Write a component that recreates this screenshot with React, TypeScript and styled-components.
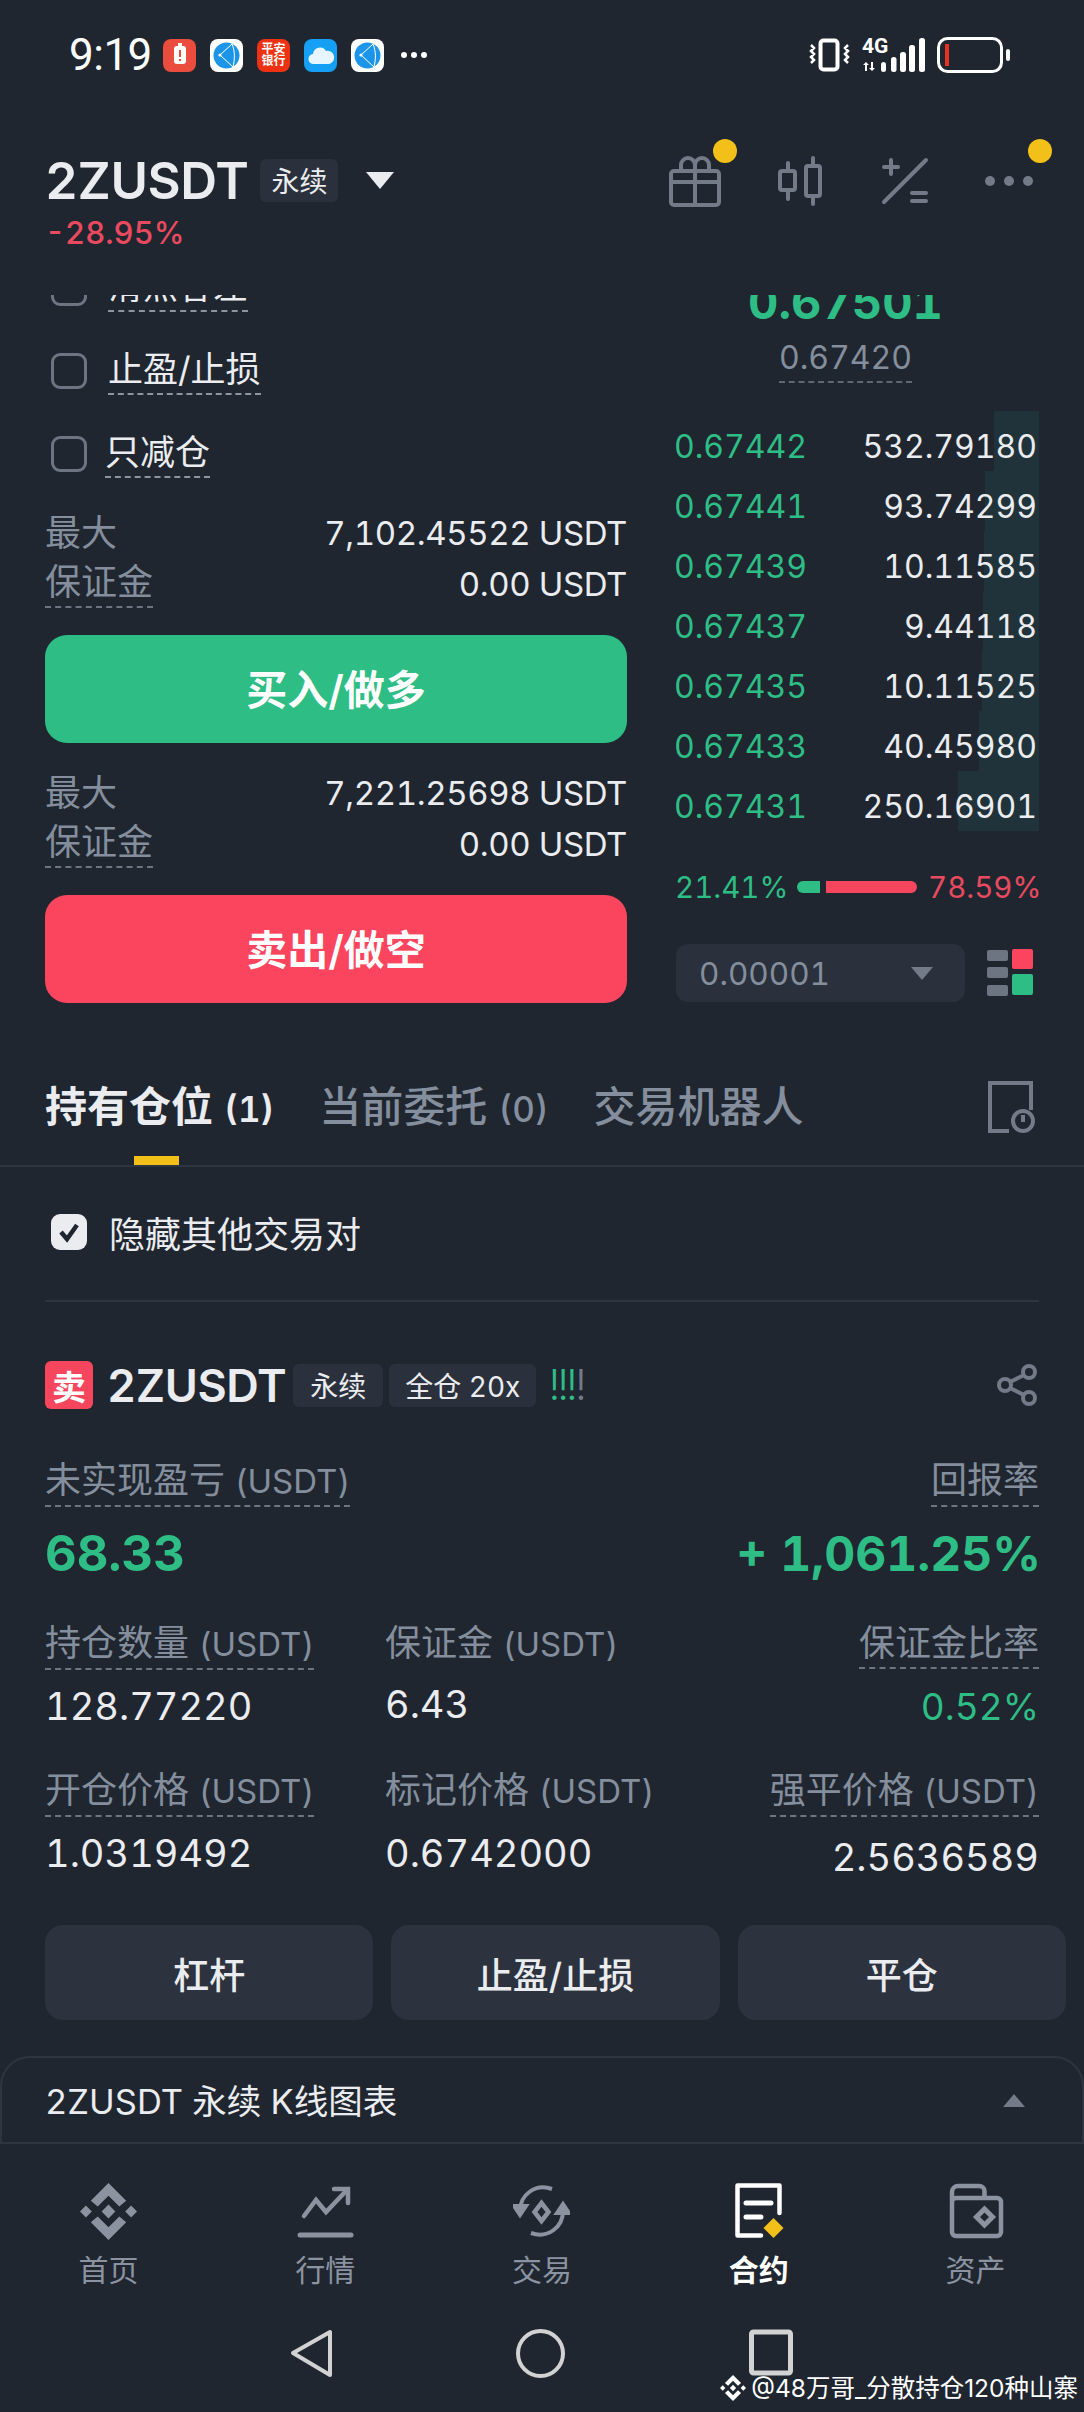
import React from 'react'
import styled, { createGlobalStyle } from 'styled-components'

const FONT = 'Inter, "Noto Sans CJK SC", "Noto Sans", sans-serif'
const BG = '#1f2630'
const GREEN = '#2ebd85'
const RED = '#f6465d'
const GRAY = '#848e9c'
const LIGHT = '#eaecef'
const CHIP = '#2a313c'
const YELLOW = '#f3c019'

const GlobalStyle = createGlobalStyle`
  html, body { margin: 0; padding: 0; background: ${BG}; }
  * { box-sizing: border-box; }
`

const Page = styled.div`
  width: 1084px;
  height: 2412px;
  position: relative;
  overflow: hidden;
  display: flex;
  flex-direction: column;
  background: ${BG};
  color: ${LIGHT};
  font-family: ${FONT};
  font-feature-settings: 'tnum' 1;
`

/* status bar */
const StatusBar = styled.div`
  height: 110px;
  flex: none;
  display: flex;
  align-items: center;
  padding: 0 74px 0 69px;
  color: #fff;
`
const Clock = styled.span`
  font-family: Roboto, sans-serif;
  font-size: 44px;
  width: 94px;
  letter-spacing: -0.5px;
`
const AppIcons = styled.div`
  display: flex;
  gap: 14px;
  align-items: center;
`
const AppIcon = styled.div<{ $bg: string }>`
  width: 33px;
  height: 33px;
  border-radius: 8px;
  background: ${(p) => p.$bg};
  display: flex;
  align-items: center;
  justify-content: center;
  overflow: hidden;
`
const BankText = styled.span`
  width: 24px;
  font-size: 12px;
  line-height: 12px;
  font-weight: 700;
  color: #fff;
  text-align: center;
`
const StatusDots = styled.span`
  margin-left: 17px;
  display: flex;
  gap: 4px;
  i {
    width: 6px;
    height: 6px;
    border-radius: 50%;
    background: #fff;
  }
`
const StatusRight = styled.div`
  margin-left: auto;
  display: flex;
  align-items: center;
  gap: 12px;
`
const NetWrap = styled.div`
  width: 63px;
  height: 34px;
  position: relative;
`
const NetLabel = styled.span`
  position: absolute;
  left: 0;
  top: -3px;
  font-family: Roboto, sans-serif;
  font-size: 21px;
  font-weight: 700;
  line-height: 22px;
`

/* header */
const Header = styled.div`
  height: 185px;
  flex: none;
  padding: 40px 46px 0 45px;
  display: flex;
  justify-content: space-between;
`
const TitleRow = styled.div`
  display: flex;
  align-items: center;
  height: 60px;
`
const Title = styled.span<{ $size?: number }>`
  font-size: ${(p) => p.$size ?? 51}px;
  font-weight: 600;
  letter-spacing: -0.4px;
  color: ${LIGHT};
`
const Tag = styled.span<{ $gap?: number; $pad?: number }>`
  height: 43px;
  padding: 0 ${(p) => p.$pad ?? 11}px;
  margin-left: ${(p) => p.$gap ?? 12}px;
  border-radius: 6px;
  background: ${CHIP};
  display: inline-flex;
  align-items: center;
  font-size: 28px;
  color: ${LIGHT};
  white-space: nowrap;
`
const Caret = styled.span`
  width: 0;
  height: 0;
  margin-left: 28px;
  border-left: 14px solid transparent;
  border-right: 14px solid transparent;
  border-top: 17px solid ${LIGHT};
`
const Change = styled.div`
  font-size: 31px;
  line-height: 46px;
  font-weight: 500;
  color: #ea4a5f;
`
const HeaderIcons = styled.div`
  display: flex;
  gap: 49px;
  padding-top: 5px;
`
const HeaderIcon = styled.div`
  width: 56px;
  height: 56px;
  position: relative;
  color: #737b88;
`
const Badge = styled.i`
  position: absolute;
  right: -14px;
  top: -16px;
  width: 24px;
  height: 24px;
  border-radius: 50%;
  background: ${YELLOW};
`

/* trade panel */
const TradeSection = styled.div`
  height: 745px;
  flex: none;
  overflow: hidden;
  padding: 0 45px;
  display: grid;
  grid-template-columns: 582px 363px;
  column-gap: 49px;
`
const OrderForm = styled.div`
  margin-top: -49px;
`
const OptionRow = styled.div<{ $gap?: number }>`
  height: 83px;
  display: flex;
  align-items: center;
  padding-left: 6px;
  gap: ${(p) => p.$gap ?? 21}px;
`
const Box = styled.span`
  width: 36px;
  height: 36px;
  flex: none;
  border: 3px solid #6d7583;
  border-radius: 9px;
`
const HintText = styled.span<{ $size?: number; $muted?: boolean }>`
  font-size: ${(p) => p.$size ?? 36}px;
  line-height: 44px;
  color: ${(p) => (p.$muted ? GRAY : LIGHT)};
  display: inline-block;
  white-space: nowrap;
  padding-bottom: 2px;
  border-bottom: 2px dashed ${(p) => (p.$muted ? '#6d7583' : '#8d95a1')};
`
const MaxBlock = styled.div`
  margin-top: 12px;
`
const InfoRow = styled.div`
  height: 51px;
  display: flex;
  align-items: center;
  justify-content: space-between;
`
const InfoLabel = styled.span`
  font-size: 36px;
  line-height: 44px;
  color: ${GRAY};
  white-space: nowrap;
`
const InfoValue = styled.span`
  font-size: 33px;
  color: ${LIGHT};
  letter-spacing: -0.4px;
`
const ActionButton = styled.div<{ $bg: string }>`
  height: 108px;
  margin: 26px 0 24px;
  padding-bottom: 4px;
  border-radius: 22px;
  background: ${(p) => p.$bg};
  display: flex;
  align-items: center;
  justify-content: center;
  color: #fff;
  font-size: 41px;
  font-weight: 600;
`
const BookColumn = styled.div`
  margin-top: -16px;
`
const MidPrice = styled.div`
  height: 46px;
  line-height: 46px;
  padding-right: 24px;
  text-align: center;
  font-size: 47px;
  font-weight: 700;
  color: ${GREEN};
`
const MarkWrap = styled.div`
  margin-top: 13px;
  height: 73px;
  padding-right: 24px;
  text-align: center;
`
const MarkPrice = styled.span`
  display: inline-block;
  font-size: 32px;
  line-height: 40px;
  padding-bottom: 3px;
  color: ${GRAY};
  border-bottom: 2px dashed #5f6774;
`
const BookRow = styled.div`
  height: 60px;
  position: relative;
  display: flex;
  align-items: center;
  justify-content: space-between;
  padding: 10px 2px 0 0;
  margin-left: -2px;
  font-size: 32px;
`
const Depth = styled.i`
  position: absolute;
  right: 0;
  top: 0;
  bottom: 0;
  background: #20333a;
`
const BookPrice = styled.span`
  position: relative;
  color: ${GREEN};
`
const BookQty = styled.span`
  position: relative;
  color: ${LIGHT};
`
const RatioRow = styled.div`
  margin-top: 36px;
  height: 40px;
  display: flex;
  align-items: center;
  margin-left: -1px;
  font-size: 29.5px;
`
const RatioText = styled.span<{ $color: string; $width?: number }>`
  flex: none;
  color: ${(p) => p.$color};
  width: ${(p) => (p.$width ? `${p.$width}px` : 'auto')};
  white-space: nowrap;
`
const RatioBar = styled.i<{ $color: string; $side: 'left' | 'right' }>`
  flex: none;
  height: 12px;
  background: ${(p) => p.$color};
  border-radius: ${(p) => (p.$side === 'left' ? '6px 0 0 6px' : '0 6px 6px 0')};
  margin-right: ${(p) => (p.$side === 'left' ? 6 : 11)}px;
`
const SelectRow = styled.div`
  margin-top: 37px;
  display: flex;
  align-items: center;
  gap: 22px;
`
const Select = styled.div`
  width: 289px;
  height: 58px;
  border-radius: 12px;
  background: ${CHIP};
  display: flex;
  align-items: center;
  justify-content: space-between;
  padding: 0 32px 0 23px;
  font-size: 31.5px;
  color: ${GRAY};
`
const SmallCaret = styled.i`
  width: 0;
  height: 0;
  border-left: 11px solid transparent;
  border-right: 11px solid transparent;
  border-top: 13px solid #737b88;
`
const Up = styled.i`
  width: 0;
  height: 0;
  margin-top: 3px;
  border-left: 11px solid transparent;
  border-right: 11px solid transparent;
  border-bottom: 13px solid #737b88;
`

/* positions */
const Tabs = styled.div`
  height: 127px;
  flex: none;
  padding: 42px 49px 0 45px;
  display: flex;
  gap: 45px;
  border-bottom: 2px solid #2e3540;
`
const TabItem = styled.div<{ $active?: boolean }>`
  position: relative;
  height: 50px;
  line-height: 50px;
  font-size: 42px;
  font-weight: ${(p) => (p.$active ? 600 : 500)};
  color: ${(p) => (p.$active ? LIGHT : GRAY)};
  white-space: nowrap;
`
const TabCount = styled.span`
  font-size: 35px;
`
const TabMarker = styled.i`
  position: absolute;
  left: 89px;
  top: 74px;
  width: 45px;
  height: 9px;
  background: ${YELLOW};
`
const TabIcon = styled.div`
  margin-left: auto;
  margin-top: -2px;
  color: #737b88;
`
const HideRow = styled.div`
  height: 135px;
  flex: none;
  margin: 0 45px;
  padding: 0 0 3px 6px;
  display: flex;
  align-items: center;
  gap: 22px;
  font-size: 36px;
  border-bottom: 2px solid #2e3540;
`
const CheckedBox = styled.span`
  width: 36px;
  height: 36px;
  border-radius: 9px;
  background: ${LIGHT};
  display: flex;
  align-items: center;
  justify-content: center;
`
const Position = styled.div`
  flex: none;
  padding: 59px 45px 0;
`
const PositionHead = styled.div`
  height: 48px;
  display: flex;
  align-items: center;
`
const SideBadge = styled.span`
  width: 48px;
  height: 48px;
  margin-right: 14px;
  border-radius: 6px;
  background: ${RED};
  color: #fff;
  font-size: 34px;
  font-weight: 600;
  display: flex;
  align-items: center;
  justify-content: center;
`
const Bangs = styled.span`
  margin-left: 12px;
  font-size: 42px;
  line-height: 48px;
  letter-spacing: -3px;
  font-weight: 300;
  color: ${GREEN};
  b {
    font-weight: 300;
    color: #737b88;
  }
`
const ShareIcon = styled.div`
  margin-left: auto;
  margin-right: 2px;
  height: 42px;
  color: #737b88;
`
const PnlRow = styled.div`
  margin-top: 49px;
  display: flex;
  justify-content: space-between;
`
const PnlValues = styled.div`
  margin: 17px -2px 0 0;
  height: 60px;
  line-height: 60px;
  display: flex;
  justify-content: space-between;
  font-weight: 700;
  color: ${GREEN};
  font-size: 49px;
`
const ReturnValue = styled.span`
  font-size: 48px;
`
const StatGrid = styled.div<{ $top: number }>`
  margin-top: ${(p) => p.$top}px;
  display: grid;
  grid-template-columns: 340px 1fr auto;
`
const StatCell = styled.div<{ $right?: boolean }>`
  display: flex;
  flex-direction: column;
  align-items: ${(p) => (p.$right ? 'flex-end' : 'flex-start')};
`
const StatValue = styled.div<{ $top: number; $green?: boolean; $size?: number }>`
  margin-top: ${(p) => p.$top}px;
  height: 50px;
  line-height: 50px;
  font-size: ${(p) => p.$size ?? 38}px;
  color: ${(p) => (p.$green ? GREEN : LIGHT)};
`
const Usdt = styled.span`
  font-size: 33px;
`
const Actions = styled.div`
  margin: 43px -27px 0 0;
  display: grid;
  grid-template-columns: repeat(3, 1fr);
  gap: 18px;
`
const GhostButton = styled.div`
  height: 95px;
  border-radius: 18px;
  background: #2c333e;
  display: flex;
  align-items: center;
  justify-content: center;
  font-size: 36px;
  font-weight: 500;
`
const ChartPanel = styled.div`
  margin-top: 36px;
  height: 88px;
  flex: none;
  padding: 0 57px 3px 43px;
  display: flex;
  align-items: center;
  justify-content: space-between;
  font-size: 34.5px;
  border: 2px solid #2e3540;
  border-radius: 30px 30px 0 0;
`

/* tab bar */
const TabBar = styled.div`
  flex: none;
  height: 156px;
  display: grid;
  grid-template-columns: repeat(5, 1fr);
  padding-top: 39px;
`
const NavItem = styled.div<{ $active?: boolean }>`
  display: flex;
  flex-direction: column;
  align-items: center;
  gap: 12px;
  color: ${(p) => (p.$active ? '#fff' : '#8b93a0')};
  font-size: 30px;
  line-height: 36px;
  font-weight: ${(p) => (p.$active ? 600 : 400)};
  svg {
    display: block;
  }
`
const SystemNav = styled.div`
  flex: none;
  padding: 29px 0 0 290px;
  display: flex;
  gap: 184px;
  color: #d2d2d2;
`
const Watermark = styled.div`
  position: absolute;
  right: 6px;
  bottom: 8px;
  display: flex;
  align-items: center;
  gap: 5px;
  color: #fff;
  font-size: 24.5px;
  font-feature-settings: normal;
  line-height: 32px;
  white-space: nowrap;
`

const BinanceLogo = ({ size = 57 }: { size?: number }) => (
  <svg width={size} height={size} viewBox="0 0 58 58" fill="currentColor">
    <path d="M29 22l7 7-7 7-7-7z" />
    <path d="M6 23l6 6-6 6-6-6z" />
    <path d="M52 23l6 6-6 6-6-6z" />
    <path d="M29 0l18 18-7 6-11-11-11 11-7-6z" />
    <path d="M29 58l18-18-7-6-11 11-11-11-7 6z" />
  </svg>
)

const Globe = () => (
  <svg width="27" height="27" viewBox="0 0 27 27">
    <circle cx="13.5" cy="13.5" r="13" fill="#1c95e8" />
    <path d="M19 2L7 13l13 12M19 2c3 7 3 15 1 23" stroke="#fff" strokeWidth="1" fill="none" />
    <circle cx="7" cy="13" r="1.6" fill="#fff" />
  </svg>
)

const book = [
  ['0.67442', '532.79180', 45],
  ['0.67441', '93.74299', 54],
  ['0.67439', '10.11585', 55],
  ['0.67437', '9.44118', 56],
  ['0.67435', '10.11525', 57],
  ['0.67433', '40.45980', 60],
  ['0.67431', '250.16901', 81],
] as const

export default function App() {
  return (
    <Page>
      <GlobalStyle />
      <StatusBar>
        <Clock>9:19</Clock>
        <AppIcons>
          <AppIcon $bg="#ea4c3d">
            <svg width="14" height="26" viewBox="0 0 14 26">
              <rect x="1" y="4" width="12" height="18" rx="3" fill="#fff" />
              <rect x="5" y="1" width="4" height="3" fill="#fff" />
              <rect x="6" y="8" width="2" height="7" fill="#ea4c3d" />
              <rect x="6" y="17" width="2" height="2" fill="#ea4c3d" />
            </svg>
          </AppIcon>
          <AppIcon $bg="#fff">
            <Globe />
          </AppIcon>
          <AppIcon $bg="#ec3212">
            <BankText>平安银行</BankText>
          </AppIcon>
          <AppIcon $bg="#15a0f5">
            <svg width="26" height="20" viewBox="0 0 26 20">
              <path d="M6 19a5 5 0 0 1-1-10 7 7 0 0 1 13-3 6 6 0 0 1 3 13z" fill="#e6f5ff" />
            </svg>
          </AppIcon>
          <AppIcon $bg="#fff">
            <Globe />
          </AppIcon>
        </AppIcons>
        <StatusDots>
          <i />
          <i />
          <i />
        </StatusDots>
        <StatusRight>
          <svg width="41" height="36" viewBox="0 0 41 36" fill="none" stroke="#fff">
            <rect x="11.5" y="3.500" width="17" height="29" rx="3" strokeWidth="4" />
            <path d="M2 8l3 3-3 3 3 3-3 3 3 3-3 3M39 8l-3 3 3 3-3 3 3 3-3 3 3 3" strokeWidth="2.500" />
          </svg>
          <NetWrap>
            <NetLabel>4G</NetLabel>
            <svg width="63" height="34" viewBox="0 0 63 34" fill="#fff">
              <path d="M1 27l3-3 3 3H5v6H3v-6zM9 24h2v6h2l-3 3-3-3h2z" />
              <rect x="19" y="24" width="5" height="10" rx="2.500" />
              <rect x="29" y="19" width="5.500" height="15" rx="2.500" />
              <rect x="38" y="14" width="6" height="20" rx="2.500" />
              <rect x="47" y="7" width="6" height="27" rx="2.500" />
              <rect x="57" y="0" width="6" height="34" rx="2.500" />
            </svg>
          </NetWrap>
          <svg width="73" height="36" viewBox="0 0 73 36" fill="none">
            <rect x="1.500" y="1.500" width="63" height="33" rx="9" stroke="#fff" strokeWidth="3" />
            <rect x="8" y="7" width="4" height="22" fill="#e8321f" />
            <rect x="69" y="12" width="4" height="12" rx="2" fill="#fff" />
          </svg>
        </StatusRight>
      </StatusBar>

      <Header>
        <div>
          <TitleRow>
            <Title>2ZUSDT</Title>
            <Tag>永续</Tag>
            <Caret />
          </TitleRow>
          <Change>-28.95%</Change>
        </div>
        <HeaderIcons>
          <HeaderIcon>
            <svg width="56" height="56" viewBox="0 0 56 56" fill="none" stroke="currentColor" strokeWidth="4">
              <rect x="4" y="16" width="48" height="34" rx="3" />
              <path d="M4 27h48M28 16v34M28 16v-6a7 7 0 1 0-14 0v6M28 16v-6a7 7 0 1 1 14 0v6" />
            </svg>
            <Badge />
          </HeaderIcon>
          <HeaderIcon>
            <svg width="56" height="56" viewBox="0 0 56 56" fill="none" stroke="currentColor" strokeWidth="4" strokeLinecap="round">
              <rect x="8" y="16" width="15" height="19" rx="2" />
              <rect x="34" y="11" width="14" height="30" rx="2" />
              <path d="M16 8v6M16 37v7M41 3v6M41 43v6" />
            </svg>
          </HeaderIcon>
          <HeaderIcon>
            <svg width="56" height="56" viewBox="0 0 56 56" fill="none" stroke="currentColor" strokeWidth="4" strokeLinecap="round">
              <path d="M14 5v14M7 12h14M49 5L7 47" />
              <path d="M35 38h14M35 46h14" />
            </svg>
          </HeaderIcon>
          <HeaderIcon>
            <svg width="56" height="56" viewBox="0 0 56 56" fill="currentColor">
              <circle cx="8" cy="26" r="5" />
              <circle cx="27" cy="26" r="5" />
              <circle cx="46" cy="26" r="5" />
            </svg>
            <Badge />
          </HeaderIcon>
        </HeaderIcons>
      </Header>

      <TradeSection>
        <OrderForm>
          <OptionRow>
            <Box />
            <HintText $size={35}>滑点容差</HintText>
          </OptionRow>
          <OptionRow>
            <Box />
            <HintText $size={35}>止盈/止损</HintText>
          </OptionRow>
          <OptionRow $gap={18}>
            <Box />
            <HintText $size={35}>只减仓</HintText>
          </OptionRow>
          <MaxBlock>
            <InfoRow>
              <InfoLabel>最大</InfoLabel>
              <InfoValue>7,102.45522 USDT</InfoValue>
            </InfoRow>
            <InfoRow>
              <HintText $muted>保证金</HintText>
              <InfoValue>0.00 USDT</InfoValue>
            </InfoRow>
          </MaxBlock>
          <ActionButton $bg={GREEN}>买入/做多</ActionButton>
          <InfoRow>
            <InfoLabel>最大</InfoLabel>
            <InfoValue>7,221.25698 USDT</InfoValue>
          </InfoRow>
          <InfoRow>
            <HintText $muted>保证金</HintText>
            <InfoValue>0.00 USDT</InfoValue>
          </InfoRow>
          <ActionButton $bg="#fb455e">卖出/做空</ActionButton>
        </OrderForm>

        <BookColumn>
          <MidPrice>0.67501</MidPrice>
          <MarkWrap>
            <MarkPrice>0.67420</MarkPrice>
          </MarkWrap>
          {book.map(([price, qty, width]) => (
            <BookRow key={price}>
              <Depth style={{ width }} />
              <BookPrice>{price}</BookPrice>
              <BookQty>{qty}</BookQty>
            </BookRow>
          ))}
          <RatioRow>
            <RatioText $color={GREEN} $width={122}>21.41%</RatioText>
            <RatioBar $color={GREEN} $side="left" style={{ width: 23 }} />
            <RatioBar $color={RED} $side="right" style={{ width: 91 }} />
            <RatioText $color="#ea4a5f">78.59%</RatioText>
          </RatioRow>
          <SelectRow>
            <Select>
              0.00001
              <SmallCaret />
            </Select>
            <svg width="46" height="48" viewBox="0 0 46 48">
              <rect x="0" y="1" width="21" height="11" rx="2" fill="#6d7583" />
              <rect x="0" y="18" width="21" height="11" rx="2" fill="#6d7583" />
              <rect x="0" y="36" width="21" height="11" rx="2" fill="#6d7583" />
              <rect x="25" y="0" width="21" height="20" rx="2" fill="#fb455e" />
              <rect x="25" y="25" width="21" height="21" rx="2" fill={GREEN} />
            </svg>
          </SelectRow>
        </BookColumn>
      </TradeSection>

      <Tabs>
        <TabItem $active>
          持有仓位 <TabCount>(1)</TabCount>
          <TabMarker />
        </TabItem>
        <TabItem>
          当前委托 <TabCount>(0)</TabCount>
        </TabItem>
        <TabItem>交易机器人</TabItem>
        <TabIcon>
          <svg width="48" height="54" viewBox="0 0 48 54" fill="none" stroke="currentColor" strokeWidth="4">
            <path d="M22 51H3V3h41v27" />
            <circle cx="36" cy="41" r="10" />
            <path d="M36 35v7" />
          </svg>
        </TabIcon>
      </Tabs>

      <HideRow>
        <CheckedBox>
          <svg width="24" height="24" viewBox="0 0 24 24" fill="none" stroke={BG} strokeWidth="4.500">
            <path d="M4 12l6 7L20 5" />
          </svg>
        </CheckedBox>
        隐藏其他交易对
      </HideRow>

      <Position>
        <PositionHead>
          <SideBadge>卖</SideBadge>
          <Title $size={45}>2ZUSDT</Title>
          <Tag $gap={7} $pad={17}>永续</Tag>
          <Tag $gap={6} $pad={16}>全仓 20x</Tag>
          <Bangs>
            !!!<b>!</b>
          </Bangs>
          <ShareIcon>
            <svg width="40" height="42" viewBox="0 0 40 42" fill="none" stroke="currentColor" strokeWidth="4">
              <circle cx="8" cy="21" r="6" />
              <circle cx="32" cy="8" r="6" />
              <circle cx="32" cy="34" r="6" />
              <path d="M13 18l14-7M13 24l14 7" />
            </svg>
          </ShareIcon>
        </PositionHead>

        <PnlRow>
          <HintText $muted>
            未实现盈亏 <Usdt>(USDT)</Usdt>
          </HintText>
          <HintText $muted>回报率</HintText>
        </PnlRow>
        <PnlValues>
          <span>68.33</span>
          <ReturnValue>+ 1,061.25%</ReturnValue>
        </PnlValues>

        <StatGrid $top={37}>
          <StatCell>
            <HintText $muted>
              持仓数量 <Usdt>(USDT)</Usdt>
            </HintText>
            <StatValue $top={11}>128.77220</StatValue>
          </StatCell>
          <StatCell>
            <InfoLabel>
              保证金 <Usdt>(USDT)</Usdt>
            </InfoLabel>
            <StatValue $top={13}>6.43</StatValue>
          </StatCell>
          <StatCell $right>
            <HintText $muted>保证金比率</HintText>
            <StatValue $top={13} $green $size={37}>0.52%</StatValue>
          </StatCell>
        </StatGrid>

        <StatGrid $top={36}>
          <StatCell>
            <HintText $muted>
              开仓价格 <Usdt>(USDT)</Usdt>
            </HintText>
            <StatValue $top={11}>1.0319492</StatValue>
          </StatCell>
          <StatCell>
            <InfoLabel>
              标记价格 <Usdt>(USDT)</Usdt>
            </InfoLabel>
            <StatValue $top={15}>0.6742000</StatValue>
          </StatCell>
          <StatCell $right>
            <HintText $muted>
              强平价格 <Usdt>(USDT)</Usdt>
            </HintText>
            <StatValue $top={15}>2.5636589</StatValue>
          </StatCell>
        </StatGrid>

        <Actions>
          <GhostButton>杠杆</GhostButton>
          <GhostButton>止盈/止损</GhostButton>
          <GhostButton>平仓</GhostButton>
        </Actions>
      </Position>

      <ChartPanel>
        <span>2ZUSDT 永续 K线图表</span>
        <Up />
      </ChartPanel>

      <TabBar>
        <NavItem>
          <BinanceLogo />
          首页
        </NavItem>
        <NavItem>
          <svg width="57" height="57" viewBox="0 0 57 57" fill="none" stroke="currentColor" strokeWidth="4.500" strokeLinecap="round">
            <path d="M7 33l12-16 10 12L49 8" />
            <path d="M37 6h14v14" />
            <path d="M3 52h51" strokeWidth="5" />
          </svg>
          行情
        </NavItem>
        <NavItem>
          <svg width="57" height="57" viewBox="0 0 57 57" fill="none" stroke="currentColor" strokeWidth="4">
            <path d="M7 28C7 12 22 0 39 6" />
            <path d="M50 28c0 16-15 28-32 22" />
            <path d="M1 23l6 9 6-9z" fill="currentColor" />
            <path d="M44 30l6-9 6 9z" fill="currentColor" />
            <path d="M28.500 20l7 9-7 9-7-9z" strokeWidth="4.500" />
          </svg>
          交易
        </NavItem>
        <NavItem $active>
          <svg width="57" height="57" viewBox="0 0 57 57" fill="none" stroke="#fff" strokeWidth="4.500" strokeLinecap="round" strokeLinejoin="round">
            <path d="M49.500 30V2.500H7.500v50H31" />
            <path d="M16 20h25M16 34h15" strokeWidth="5" />
            <path d="M43.500 35l10 10-10 10-10-10z" fill={YELLOW} stroke="none" />
          </svg>
          合约
        </NavItem>
        <NavItem>
          <svg width="57" height="57" viewBox="0 0 57 57" fill="none" stroke="currentColor" strokeWidth="4.500">
            <path d="M5 17V9a6 6 0 0 1 6-6h21c3 0 5.500 2 5.500 5v7" />
            <rect x="5" y="15" width="49" height="38" rx="4" />
            <path d="M37.500 26l8 8-8 8-8-8z" strokeWidth="5" />
          </svg>
          资产
        </NavItem>
      </TabBar>

      <SystemNav>
        <svg width="42" height="49" viewBox="0 0 42 49" fill="none" stroke="currentColor" strokeWidth="4" strokeLinejoin="round">
          <path d="M40 3v43L3 24z" />
        </svg>
        <svg width="49" height="49" viewBox="0 0 49 49" fill="none" stroke="currentColor" strokeWidth="4">
          <circle cx="24.500" cy="24.500" r="22.500" />
        </svg>
        <svg width="44" height="47" viewBox="0 0 44 47" fill="none" stroke="currentColor" strokeWidth="5">
          <rect x="2.500" y="3" width="39" height="41" rx="2" />
        </svg>
      </SystemNav>

      <Watermark>
        <BinanceLogo size={26} />
        @48万哥_分散持仓120种山寨
      </Watermark>
    </Page>
  )
}
